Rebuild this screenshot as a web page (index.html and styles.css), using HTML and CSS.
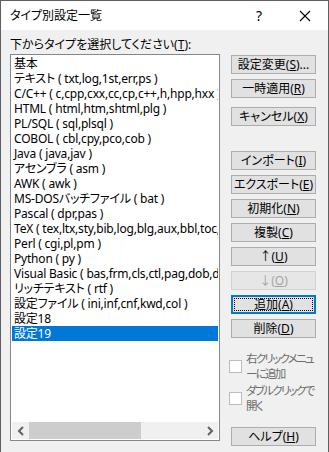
FILE: index.html
```html
<!DOCTYPE html>
<html lang="ja">
<head>
    <meta charset="UTF-8">
    <title>タイプ別設定一覧</title>
    <link rel="stylesheet" href="styles.css">
</head>
<body>
    <div class="window">
        <div class="titlebar">
            <span class="title">タイプ別設定一覧</span>
            <span class="capbtn">?</span>
            <span class="capbtn">
                <svg width="12" height="12" viewBox="0 0 12 12"><path d="M1 1L11 11M11 1L1 11" stroke="#000" stroke-width="1.1" fill="none"/></svg>
            </span>
        </div>
        <div class="main">
            <div class="left">
                <div class="label">下からタイプを選択してください(<u>T</u>):</div>
                <div class="listbox">
                    <ul class="items">
                        <li>基本</li>
                        <li>テキスト ( txt,log,1st,err,ps )</li>
                        <li>C/C++ ( c,cpp,cxx,cc,cp,c++,h,hpp,hxx )</li>
                        <li>HTML ( html,htm,shtml,plg )</li>
                        <li>PL/SQL ( sql,plsql )</li>
                        <li>COBOL ( cbl,cpy,pco,cob )</li>
                        <li>Java ( java,jav )</li>
                        <li>アセンブラ ( asm )</li>
                        <li>AWK ( awk )</li>
                        <li>MS-DOSバッチファイル ( bat )</li>
                        <li>Pascal ( dpr,pas )</li>
                        <li>TeX ( tex,ltx,sty,bib,log,blg,aux,bbl,toc,lof,lot )</li>
                        <li>Perl ( cgi,pl,pm )</li>
                        <li>Python ( py )</li>
                        <li>Visual Basic ( bas,frm,cls,ctl,pag,dob,dsr,vb )</li>
                        <li>リッチテキスト ( rtf )</li>
                        <li>設定ファイル ( ini,inf,cnf,kwd,col )</li>
                        <li>設定18</li>
                        <li class="selected">設定19</li>
                    </ul>
                    <div class="hscroll">
                        <span class="arrow">
                            <svg width="8" height="10" viewBox="0 0 8 10"><path d="M6 1L2 5L6 9" stroke="#606060" stroke-width="2" fill="none"/></svg>
                        </span>
                        <div class="track"><div class="thumb"></div></div>
                        <span class="arrow">
                            <svg width="8" height="10" viewBox="0 0 8 10"><path d="M2 1L6 5L2 9" stroke="#606060" stroke-width="2" fill="none"/></svg>
                        </span>
                    </div>
                </div>
            </div>
            <div class="right">
                <div class="btn">設定変更(<u>S</u>)...</div>
                <div class="btn">一時適用(<u>R</u>)</div>
                <div class="btn sep-s">キャンセル(<u>X</u>)</div>
                <div class="btn sep-l">インポート(<u>I</u>)</div>
                <div class="btn">エクスポート(<u>E</u>)</div>
                <div class="btn">初期化(<u>N</u>)</div>
                <div class="btn">複製(<u>C</u>)</div>
                <div class="btn">↑(<u>U</u>)</div>
                <div class="btn disabled">↓(<u>O</u>)</div>
                <div class="btn focused">追加(<u>A</u>)</div>
                <div class="btn">削除(<u>D</u>)</div>
                <div class="check first">
                    <span class="box"></span>
                    <span class="ctext">右クリックメニュ<br>ーに追加</span>
                </div>
                <div class="check">
                    <span class="box"></span>
                    <span class="ctext">ダブルクリックで<br>開く</span>
                </div>
                <div class="btn help">ヘルプ(<u>H</u>)</div>
            </div>
        </div>
    </div>
</body>
</html>
```

FILE: styles.css
```css
body {
    margin: 0;
    font-family: "Noto Sans", "Noto Sans CJK JP", sans-serif;
    font-size: 12px;
    font-feature-settings: "palt";
    color: #000;
}

.window {
    width: 329px;
    height: 452px;
    box-sizing: border-box;
    border: 1px solid #5f5f5f;
    border-bottom: none;
    background: #f0f0f0;
    overflow: hidden;
}

.titlebar {
    height: 29px;
    background: #fff;
    display: flex;
    align-items: center;
}

.title {
    flex: 1;
    padding-left: 9px;
    line-height: 29px;
}

.capbtn {
    width: 46px;
    height: 29px;
    display: flex;
    align-items: center;
    justify-content: center;
    font-size: 14px;
}

.main {
    display: flex;
    padding: 7px 0 0 9px;
    gap: 11px;
}

.left {
    width: 210px;
}

.label {
    line-height: 15px;
    margin-bottom: 2px;
    white-space: nowrap;
}

.listbox {
    height: 387px;
    box-sizing: border-box;
    border: 1px solid #828790;
    background: #fff;
    padding: 1px;
    display: flex;
    flex-direction: column;
}

.items {
    list-style: none;
    margin: 0;
    padding: 0;
    flex: 1;
    overflow: hidden;
}

.items li {
    height: 15px;
    line-height: 15px;
    padding-left: 2px;
    white-space: nowrap;
    overflow: hidden;
    letter-spacing: -0.2px;
}

.items li.selected {
    background: #0078d7;
    color: #fff;
}

.hscroll {
    height: 17px;
    display: flex;
    background: #f0f0f0;
}

.arrow {
    width: 17px;
    display: flex;
    align-items: center;
    justify-content: center;
}

.track {
    flex: 1;
}

.thumb {
    width: 112px;
    height: 17px;
    background: #cdcdcd;
}

.right {
    width: 85px;
    padding-top: 18px;
    display: flex;
    flex-direction: column;
}

.btn {
    position: relative;
    height: 19px;
    box-sizing: border-box;
    border: 1px solid #adadad;
    background: #e1e1e1;
    text-align: center;
    line-height: 17px;
    margin-bottom: 5px;
    white-space: nowrap;
}

.btn.sep-s {
    margin-top: 4px;
}

.btn.sep-l {
    margin-top: 20px;
}

.btn.disabled {
    background: #e6e6e6;
    border-color: #d2d2d2;
    color: #a3a3a3;
}

.btn.focused {
    border-color: #0078d7;
    box-shadow: inset 0 0 0 1px #0078d7;
}

.btn.focused::after {
    content: "";
    position: absolute;
    left: 2px;
    right: 2px;
    top: 2px;
    bottom: 2px;
    border: 1px dotted #000;
}

.check {
    display: flex;
    align-items: center;
    margin-left: -2px;
    margin-bottom: 2px;
}

.check.first {
    margin-top: 8px;
}

.box {
    width: 13px;
    height: 13px;
    box-sizing: border-box;
    border: 1px solid #bcbcbc;
    background: #fff;
    margin-right: 4px;
    flex: none;
}

.ctext {
    font-size: 11.5px;
    letter-spacing: -1.7px;
    line-height: 15px;
    color: #6d6d6d;
    white-space: nowrap;
}

.btn.help {
    margin-top: 12px;
}
```
